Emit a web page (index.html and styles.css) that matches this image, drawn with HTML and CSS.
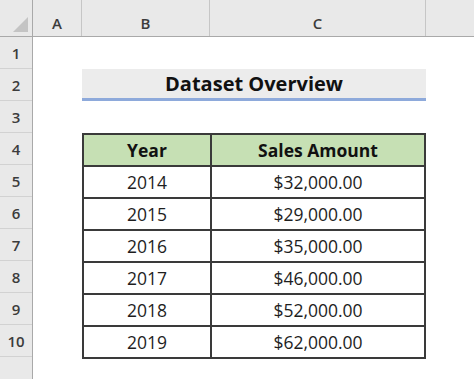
FILE: index.html
```html
<!DOCTYPE html>
<html lang="en">
<head>
    <meta charset="UTF-8">
    <meta name="viewport" content="width=device-width, initial-scale=1.0">
    <title>Dataset Overview</title>
    <link rel="stylesheet" href="styles.css">
</head>
<body>

<div class="sheet">
    <div class="corner"><span class="corner-tri"></span></div>

    <div class="col-heads">
        <div class="col-head col-a">A</div>
        <div class="col-head col-b">B</div>
        <div class="col-head col-c">C</div>
        <div class="col-head col-d"></div>
    </div>

    <div class="row-heads">
        <div class="row-head first">1</div>
        <div class="row-head">2</div>
        <div class="row-head">3</div>
        <div class="row-head">4</div>
        <div class="row-head">5</div>
        <div class="row-head">6</div>
        <div class="row-head">7</div>
        <div class="row-head">8</div>
        <div class="row-head">9</div>
        <div class="row-head">10</div>
        <div class="row-head last"></div>
    </div>

    <div class="cells">
        <div class="title">Dataset Overview</div>

        <table class="data">
            <thead>
                <tr>
                    <th>Year</th>
                    <th>Sales Amount</th>
                </tr>
            </thead>
            <tbody>
                <tr><td>2014</td><td>$32,000.00</td></tr>
                <tr><td>2015</td><td>$29,000.00</td></tr>
                <tr><td>2016</td><td>$35,000.00</td></tr>
                <tr><td>2017</td><td>$46,000.00</td></tr>
                <tr><td>2018</td><td>$52,000.00</td></tr>
                <tr><td>2019</td><td>$62,000.00</td></tr>
            </tbody>
        </table>
    </div>
</div>

</body>
</html>
```

FILE: styles.css
```css
body {
    margin: 0;
    font-family: "Open Sans", "Noto Sans", sans-serif;
    background: #ffffff;
}

.sheet {
    display: grid;
    grid-template-columns: 33px 1fr;
    grid-template-rows: 37px 1fr;
    width: 474px;
    height: 379px;
    overflow: hidden;
}

/* headers */
.corner {
    background: #e9e9e9;
    border-right: 1px solid #a9a9a9;
    border-bottom: 1px solid #a9a9a9;
    box-sizing: border-box;
    position: relative;
}

.corner-tri {
    position: absolute;
    right: 4px;
    bottom: 4px;
    width: 0;
    height: 0;
    border-left: 15px solid transparent;
    border-bottom: 15px solid #c4c4c4;
}

.col-heads {
    display: flex;
    background: #e9e9e9;
    border-bottom: 1px solid #a9a9a9;
    box-sizing: border-box;
}

.col-head {
    box-sizing: border-box;
    display: flex;
    align-items: center;
    justify-content: center;
    padding-top: 10px;
    font-size: 15px;
    font-weight: 600;
    color: #3c3c3c;
    border-right: 1px solid #c6c6c6;
    background-image: linear-gradient(#e9e9e9, #e9e9e9);
    background-repeat: no-repeat;
    background-size: 100% 12px;
}

.col-a { width: 49px; }
.col-b { width: 128px; }
.col-c { width: 216px; }
.col-d { flex: 1; border-right: none; }

.row-heads {
    display: flex;
    flex-direction: column;
    background: #e9e9e9;
    border-right: 1px solid #a9a9a9;
    box-sizing: border-box;
}

.row-head {
    box-sizing: border-box;
    height: 32px;
    display: flex;
    align-items: center;
    justify-content: center;
    font-size: 15px;
    font-weight: 600;
    color: #3c3c3c;
    border-bottom: 1px solid #d2d2d2;
}

.row-head.first { height: 32px; }
.row-head.last { flex: 1; border-bottom: none; }

/* cells */
.cells {
    display: grid;
    grid-template-columns: 49px 344px 1fr;
    grid-template-rows: 32px 32px 32px 225px 1fr;
}

.title {
    grid-column: 2;
    grid-row: 2;
    box-sizing: border-box;
    background: #ececec;
    border-bottom: 3px solid #8eaadb;
    display: flex;
    align-items: center;
    justify-content: center;
    font-size: 20px;
    font-weight: bold;
    color: #111;
}

.data {
    grid-column: 2;
    grid-row: 4;
    width: 344px;
    border-collapse: collapse;
    border: 2px solid #3a3a3a;
    font-size: 17.5px;
    color: #1e1e1e;
}

.data th,
.data td {
    height: 30px;
    padding: 0;
    text-align: center;
    border: 2px solid #3a3a3a;
}

.data th {
    background: #c6e0b4;
    font-weight: bold;
    color: #111;
}

.data th:first-child,
.data td:first-child {
    width: 126px;
}
```
